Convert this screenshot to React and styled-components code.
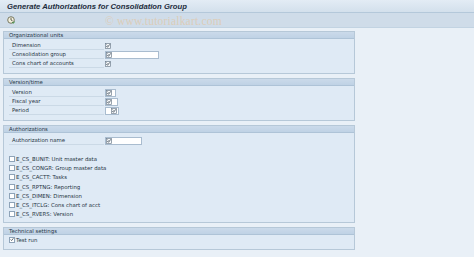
import styled, { createGlobalStyle } from "styled-components";

const GlobalStyle = createGlobalStyle`
  html, body {
    margin: 0;
    padding: 0;
    background: #e9f0f7;
  }
  * {
    box-sizing: border-box;
  }
`;

const Window = styled.div`
  width: 474px;
  height: 257px;
  overflow: hidden;
  position: relative;
  background: #e9f0f7;
  font-family: "DejaVu Sans", "Liberation Sans", sans-serif;
  color: #1f2d3b;
  display: flex;
  flex-direction: column;
`;

const TitleBar = styled.div`
  height: 13px;
  padding-left: 7px;
  display: flex;
  align-items: center;
  background: linear-gradient(#e3ecf5, #d3e0ec);
  border-bottom: 1px solid #b4c8da;
  font-family: "Liberation Sans", Arial, sans-serif;
  font-weight: bold;
  font-style: italic;
  font-size: 7.7px;
  color: #1d2c3c;
`;

const Toolbar = styled.div`
  height: 15px;
  padding-left: 7px;
  display: flex;
  align-items: center;
  background: #cfdce9;
  border-bottom: 1px solid #c2d3e2;
`;

const Watermark = styled.div`
  position: absolute;
  left: 105px;
  top: 15px;
  font-family: "Liberation Serif", serif;
  font-size: 11.5px;
  color: #dccdb9;
  letter-spacing: 0.2px;
`;

const Content = styled.div`
  padding: 3px 0 0 3px;
  display: flex;
  flex-direction: column;
  gap: 4px;
  width: 355px;
`;

const Section = styled.div`
  width: 352px;
  border: 1px solid #b6c8d8;
  background: #dfeaf5;
  padding-bottom: ${(p) => p.$pb ?? 5}px;
`;

const Header = styled.div`
  height: 7px;
  padding-left: 5px;
  display: flex;
  align-items: center;
  background: linear-gradient(#cbdaea, #bfd2e5);
  border-bottom: 1px solid #aec3d7;
  font-size: 5.4px;
  color: #2a3847;
`;

const Body = styled.div`
  padding: ${(p) => p.$pt ?? 2}px 0 0 5px;
  display: flex;
  flex-direction: column;
`;

const Row = styled.div`
  height: 9px;
  display: flex;
  align-items: center;
`;

const Label = styled.div`
  width: 95px;
  height: 9px;
  padding-left: 3px;
  display: flex;
  align-items: center;
  border-bottom: 1px solid #cbd9e6;
  font-size: 5.4px;
  color: #263544;
  margin-right: 1px;
`;

const Field = styled.div`
  width: ${(p) => p.$w}px;
  height: 8px;
  flex: none;
  background: ${(p) => (p.$plain ? "transparent" : "#ffffff")};
  border: ${(p) => (p.$plain ? "none" : "1px solid #a9bccf")};
  display: flex;
  align-items: center;
  justify-content: ${(p) => (p.$right ? "flex-end" : "flex-start")};
  padding: ${(p) => (p.$plain ? "0" : "0 1px 0 0")};
`;

const Gap = styled.div`
  height: ${(p) => p.$h}px;
`;

const CheckRow = styled.div`
  height: 9.3px;
  display: flex;
  align-items: center;
  gap: 1px;
  font-size: 5.4px;
  color: #263544;
`;

const Box = styled.div`
  width: 6px;
  height: 6px;
  background: #ffffff;
  border: 1px solid #8ea3b8;
  display: flex;
  align-items: center;
  justify-content: center;
`;

const ExecIcon = () => (
  <svg width="8" height="8" viewBox="0 0 8 8">
    <circle cx="4" cy="4" r="3.3" fill="#f4f1de" stroke="#6b6b55" strokeWidth="0.9" />
    <path d="M4 1.8 V4 L5.6 4.9" stroke="#3d3d30" strokeWidth="0.8" fill="none" />
    <path d="M5.2 6.2 L6.3 7.3 L7.8 5.4" stroke="#2f8a2f" strokeWidth="0.9" fill="none" />
  </svg>
);

const MatchIcon = () => (
  <svg width="6" height="6" viewBox="0 0 6 6" style={{ flex: "none" }}>
    <rect x="0.5" y="0.5" width="5" height="5" fill="#f6f8fa" stroke="#6f7f8f" strokeWidth="0.7" />
    <path d="M1.3 3 L2.5 4.3 L4.8 1.3" stroke="#3b4854" strokeWidth="0.8" fill="none" />
    <path d="M1.4 1.5 L2.6 2.6" stroke="#3b4854" strokeWidth="0.6" fill="none" />
  </svg>
);

const Tick = () => (
  <svg width="5" height="5" viewBox="0 0 5 5">
    <path d="M0.8 2.5 L2 3.8 L4.3 0.9" stroke="#27323d" strokeWidth="0.9" fill="none" />
  </svg>
);

const Input = ({ w, right, plain }) => (
  <Field $w={w} $right={right} $plain={plain}>
    <MatchIcon />
  </Field>
);

const auths = [
  "E_CS_BUNIT: Unit master data",
  "E_CS_CONGR: Group master data",
  "E_CS_CACTT: Tasks",
  "E_CS_RPTNG: Reporting",
  "E_CS_DIMEN: Dimension",
  "E_CS_ITCLG: Cons chart of acct",
  "E_CS_RVERS: Version",
];

export default function App() {
  return (
    <>
      <GlobalStyle />
      <Window>
        <TitleBar>Generate Authorizations for Consolidation Group</TitleBar>
        <Toolbar>
          <ExecIcon />
        </Toolbar>
        <Watermark>© www.tutorialkart.com</Watermark>
        <Content>
          <Section>
            <Header>Organizational units</Header>
            <Body>
              <Row>
                <Label>Dimension</Label>
                <Input w={7} plain />
              </Row>
              <Row>
                <Label>Consolidation group</Label>
                <Input w={54} />
              </Row>
              <Row>
                <Label>Cons chart of accounts</Label>
                <Input w={7} plain />
              </Row>
            </Body>
          </Section>
          <Section>
            <Header>Version/time</Header>
            <Body>
              <Row>
                <Label>Version</Label>
                <Input w={11} />
              </Row>
              <Row>
                <Label>Fiscal year</Label>
                <Input w={13} />
              </Row>
              <Row>
                <Label>Period</Label>
                <Input w={14} right />
              </Row>
            </Body>
          </Section>
          <Section $pb={3}>
            <Header>Authorizations</Header>
            <Body $pt={3}>
              <Row>
                <Label>Authorization name</Label>
                <Input w={37} />
              </Row>
              <Gap $h={9} />
              {auths.map((a) => (
                <CheckRow key={a}>
                  <Box />
                  {a}
                </CheckRow>
              ))}
            </Body>
          </Section>
          <Section $pb={5}>
            <Header>Technical settings</Header>
            <Body $pt={0}>
              <CheckRow>
                <Box>
                  <Tick />
                </Box>
                Test run
              </CheckRow>
            </Body>
          </Section>
        </Content>
      </Window>
    </>
  );
}
